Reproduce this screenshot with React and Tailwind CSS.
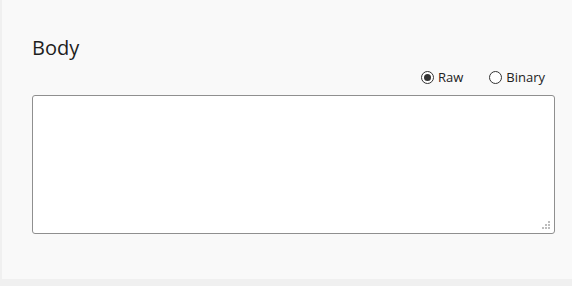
import React, { useState } from 'react';

const Radio = ({ checked, label, onClick }) => (
    <label onClick={onClick} className="flex items-center gap-[4px] cursor-pointer">
        <span className="w-[13px] h-[13px] rounded-full border border-[#333] bg-white flex items-center justify-center">
            {checked && <span className="w-[7px] h-[7px] rounded-full bg-[#333]" />}
        </span>
        <span>{label}</span>
    </label>
);

// grip de puntos para redimensionar (estilo del original)
const ResizeGrip = () => (
    <svg width="9" height="9" viewBox="0 0 9 9" className="absolute right-[4px] bottom-[4px] pointer-events-none">
        <g fill="#bdbdbd">
            <rect x="6" y="0" width="2" height="2" />
            <rect x="3" y="3" width="2" height="2" />
            <rect x="6" y="3" width="2" height="2" />
            <rect x="0" y="6" width="2" height="2" />
            <rect x="3" y="6" width="2" height="2" />
            <rect x="6" y="6" width="2" height="2" />
        </g>
    </svg>
);

export default function App() {
    const [mode, setMode] = useState('raw');

    return (
        <div className="h-[286px] bg-[#f0f0f0] font-['Open_Sans',sans-serif] text-[#222]">
            <div className="ml-[2px] h-[279px] bg-[#f9f9f9] pl-[30px] pr-[17px] pt-[34px]">
                <h2 className="text-[20px] leading-[27px] text-[#1e1e1e]">Body</h2>
                <div className="flex justify-end gap-[26px] pr-[10px] mt-[6px] h-[20px] text-[13px] leading-[20px]">
                    <Radio checked={mode === 'raw'} label="Raw" onClick={() => setMode('raw')} />
                    <Radio checked={mode === 'binary'} label="Binary" onClick={() => setMode('binary')} />
                </div>
                <div className="relative mt-[8px]">
                    <textarea
                        className="block w-full h-[139px] border border-[#8f8f8f] rounded-[3px] bg-white outline-none resize-none"
                    />
                    <ResizeGrip />
                </div>
            </div>
        </div>
    );
}
